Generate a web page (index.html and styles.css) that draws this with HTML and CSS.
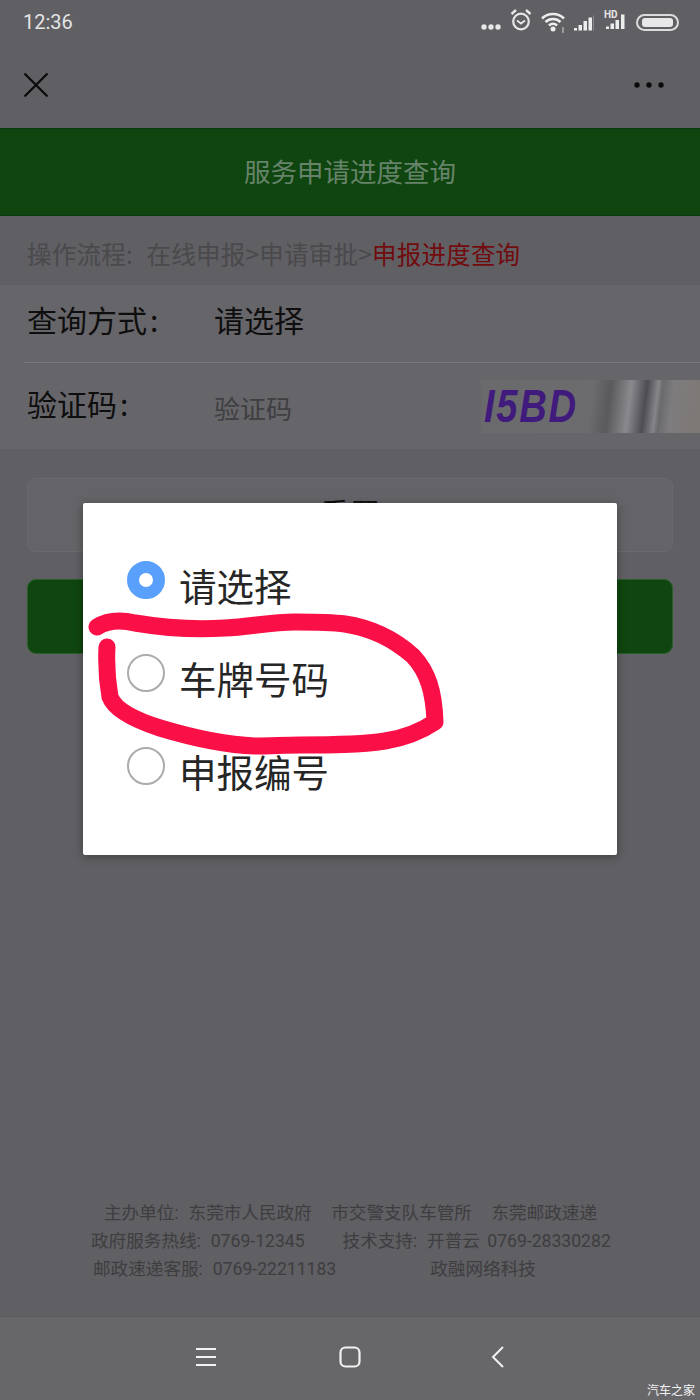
FILE: index.html
```html
<!DOCTYPE html>
<html lang="zh-CN">
<head>
<meta charset="utf-8">
<title>服务申请进度查询</title>
<link rel="stylesheet" href="styles.css">
</head>
<body>
<div class="screen">
  <div class="status">
    <span class="time">12:36</span>
    <div class="status-icons">
      <svg class="ic-dots" viewBox="0 0 20 6"><circle cx="3" cy="3" r="2.700"/><circle cx="10" cy="3" r="2.700"/><circle cx="17" cy="3" r="2.700"/></svg>
      <svg class="ic-alarm" viewBox="0 0 22 24"><circle cx="11" cy="13.500" r="7.800" fill="none" stroke="#e6e6e6" stroke-width="2.200"/><path d="M7 12.500l4 3 4-3" fill="none" stroke="#e6e6e6" stroke-width="1.800"/><path d="M1.500 6L6 2M20.500 6L16 2" stroke="#e6e6e6" stroke-width="2.400" fill="none"/></svg>
      <svg class="ic-wifi" viewBox="0 0 26 24"><path d="M1 8.500C7 2.500 17 2.500 23 8.500M4.500 12C8.500 8 15.500 8 19.500 12M8 15.500C10.300 13.300 13.700 13.300 16 15.500" fill="none" stroke="#ededed" stroke-width="2.600"/><circle cx="12" cy="19" r="2.500" fill="#ededed"/><path d="M22 17v6" stroke="#bbb" stroke-width="1.300"/></svg>
      <svg class="ic-signal" viewBox="0 0 20 16"><path d="M0 13h3v2.500H0zM4.500 10H8v5.500H4.500zM9.500 6h3.500v9.500H9.500zM14.500 2.500H18v13h-3.500z" fill="#ededed"/><path d="M19 0.500h1v15h-1z" fill="#8a898c"/></svg>
      <div class="ic-hd">
        <span class="hd-label">HD</span>
        <svg class="ic-signal-hd" viewBox="0 0 20 16"><path d="M0 12.500h3V15H0zM4.500 9.500H8V15H4.500zM9.500 6H13v9H9.500zM15 0.500h3.500V15H15z" fill="#ededed"/></svg>
      </div>
      <div class="battery"><div class="battery-fill"></div></div>
    </div>
  </div>

  <div class="topnav">
    <svg class="ic-close" viewBox="0 0 26 26"><path d="M1.500 1.500l23 23M24.500 1.500l-23 23" stroke="#0a0a0a" stroke-width="2.200" fill="none"/></svg>
    <svg class="ic-more" viewBox="0 0 32 8"><circle cx="4" cy="4" r="2.700"/><circle cx="16" cy="4" r="2.700"/><circle cx="28" cy="4" r="2.700"/></svg>
  </div>

  <div class="title">服务申请进度查询</div>

  <div class="crumbs">操作流程: 在线申报&gt;申请审批&gt;<span class="crumb-now">申报进度查询</span></div>

  <div class="form">
    <div class="row row-first">
      <span class="label">查询方式<span class="colon">:</span></span>
      <span class="value">请选择</span>
    </div>
    <div class="row row-second">
      <span class="label label-code">验证码<span class="colon">:</span></span>
      <span class="placeholder">验证码</span>
      <div class="captcha"><span class="captcha-text">I5BD</span></div>
    </div>
  </div>

  <div class="actions">
    <div class="btn btn-reset"><span class="btn-text">重置</span></div>
    <div class="btn btn-submit"></div>
  </div>

  <div class="footer">
    <div class="foot-row foot-1"><span>主办单位<span class="sep">: </span>东莞市人民政府</span><span>市交警支队车管所</span><span>东莞邮政速递</span></div>
    <div class="foot-row foot-2"><span>政府服务热线<span class="sep">: </span>0769-12345</span><span>技术支持<span class="sep">: </span>开普云 0769-28330282</span></div>
    <div class="foot-row foot-3"><span>邮政速递客服<span class="sep">: </span>0769-22211183</span><span>政融网络科技</span></div>
  </div>

  <div class="softkeys">
    <svg class="key key-menu" viewBox="0 0 22 20"><path d="M1 2h20M1 10h20M1 18h20" stroke="#f2f2f2" stroke-width="2" fill="none"/></svg>
    <svg class="key key-home" viewBox="0 0 22 22"><rect x="1.500" y="1.500" width="19" height="19" rx="5" fill="none" stroke="#f2f2f2" stroke-width="2.200"/></svg>
    <svg class="key key-back" viewBox="0 0 14 22"><path d="M12 1L2 11l10 10" stroke="#f2f2f2" stroke-width="2" fill="none"/></svg>
  </div>

  <div class="dialog">
    <div class="option"><span class="radio radio-on"></span><span class="option-text">请选择</span></div>
    <div class="option"><span class="radio"></span><span class="option-text">车牌号码</span></div>
    <div class="option"><span class="radio"></span><span class="option-text">申报编号</span></div>
  </div>

  <svg class="ink" viewBox="0 0 700 1400">
    <path d="M97 627C108 620 122 620 135 623C165 628 195 630 225 628C250 627 270 622 295 622C315 622 330 622 345 624C372 628 395 640 413 656C428 672 434 692 435 722C420 732 405 738 385 741C360 745 330 745 300 745C285 745 270 746 255 746C225 745 190 737 160 728C135 720 115 710 110 697C107 680 106 665 107 647"/>
  </svg>

  <span class="watermark">汽车之家</span>
</div>
</body>
</html>
```

FILE: styles.css
```css
* { box-sizing: border-box; }

html, body {
  margin: 0;
  padding: 0;
  background: #605f63;
}

.screen {
  position: relative;
  width: 700px;
  height: 1400px;
  overflow: hidden;
  display: flex;
  flex-direction: column;
  background: #605f63;
  font-family: "Noto Sans CJK SC", "Noto Sans", sans-serif;
}

/* status bar */
.status {
  height: 44px;
  flex: none;
  display: flex;
  align-items: center;
  justify-content: space-between;
  padding: 0 21px 0 23px;
}

.time {
  font-family: Roboto, sans-serif;
  font-size: 20px;
  color: #e4e4e4;
}

.status-icons {
  display: flex;
  align-items: center;
}

.ic-dots { width: 20px; height: 6px; fill: #e6e6e6; margin: 10px 0 0 0; }
.ic-alarm { width: 22px; height: 24px; margin: -4px 0 0 9px; }
.ic-wifi { width: 26px; height: 24px; margin: 0 0 0 9px; }
.ic-signal { width: 20px; height: 16px; margin: 2px 0 0 7px; }

.ic-hd {
  display: flex;
  flex-direction: column;
  align-items: flex-start;
  width: 24px;
  margin: -4px 0 0 10px;
}

.hd-label {
  font-family: Roboto, sans-serif;
  font-size: 10px;
  font-weight: 700;
  line-height: 9px;
  color: #e6e6e6;
}

.ic-signal-hd { width: 24px; height: 16px; margin-top: -5px; }

.battery {
  width: 43px;
  height: 17px;
  margin: 0 0 0 8px;
  padding: 2px 4px;
  border: 2px solid #dcdcdc;
  border-radius: 9px;
}

.battery-fill {
  width: 100%;
  height: 100%;
  background: #e8e8e8;
  border-radius: 3px;
}

/* top navigation */
.topnav {
  height: 84px;
  flex: none;
  display: flex;
  align-items: center;
  justify-content: space-between;
  padding: 0 35px 2px 23px;
}

.ic-close { width: 26px; height: 26px; }
.ic-more { width: 32px; height: 8px; fill: #0a0a0a; }

/* green title */
.title {
  height: 88px;
  flex: none;
  display: flex;
  align-items: center;
  justify-content: center;
  padding-bottom: 4px;
  background: #0f450f;
  border-top: 1px solid #0a3a10;
  border-bottom: 1px solid #0a3a10;
  font-size: 26.500px;
  color: #66836a;
}

/* breadcrumbs */
.crumbs {
  height: 69px;
  flex: none;
  padding: 6px 0 0 27px;
  display: flex;
  align-items: center;
  background: #605f63;
  font-size: 24.500px;
  letter-spacing: .22px;
  word-spacing: 8px;
  color: #4a494c;
  white-space: pre;
}

.crumb-now { color: #710b0e; }

/* form */
.form {
  height: 164px;
  flex: none;
  padding-left: 24px;
  background: #666569;
}

.row {
  display: flex;
  align-items: center;
  color: #0e0e0e;
}

.row-first {
  height: 78px;
  padding: 0 0 10px 3px;
  border-bottom: 1px solid #79787c;
}

.row-second {
  height: 86px;
  padding-left: 3px;
}

.label {
  width: 187px;
  font-size: 30px;
  line-height: 40px;
}

.colon { margin-left: 3px; }

.label-code { margin-top: -6px; }

.value {
  font-size: 30px;
  line-height: 40px;
}

.placeholder {
  width: 267px;
  font-size: 26px;
  line-height: 36px;
  margin-top: 4px;
  color: #3f3e41;
}

.captcha {
  width: 219px;
  height: 53px;
  margin-top: 0;
  display: flex;
  align-items: center;
  padding-left: 3px;
  background: linear-gradient(97deg, #6a6a6c 0, #6c6c6e 50%, #5a5a5c 58%, #6f6f72 62%, #8a8a8e 67%, #67676b 71%, #4e4e52 74%, #85858a 79%, #6a6a6c 81%, #7e7c7e 86%, #7e7874 100%);
}

.captcha-text {
  font-family: "Liberation Sans", sans-serif;
  font-size: 46px;
  line-height: 53px;
  font-weight: 700;
  font-style: italic;
  letter-spacing: 2px;
  color: #401a7c;
  transform: scaleX(.83);
  transform-origin: left center;
}

/* buttons */
.actions {
  flex: none;
  padding: 29px 27px 0;
  display: flex;
  flex-direction: column;
  gap: 27px;
}

.btn {
  height: 75px;
  border-radius: 9px;
  display: flex;
  align-items: center;
  justify-content: center;
}

.btn-reset {
  height: 74px;
  padding-bottom: 7px;
  background: #646367;
  border: 1px solid #6b6a6e;
}

.btn-text {
  font-size: 30px;
  color: #0e0e0e;
}

.btn-submit {
  background: #0f450f;
  border: 1px solid #2a5f2a;
}

/* footer */
.footer {
  flex: 1;
  display: flex;
  flex-direction: column;
  justify-content: flex-end;
  gap: 4px;
  padding-bottom: 35px;
  font-size: 17.600px;
  line-height: 24px;
  word-spacing: 3px;
  color: #3e3d40;
  font-family: Roboto, "Noto Sans CJK SC", sans-serif;
}

.sep { word-spacing: 5.500px; }

.foot-row { display: flex; white-space: pre; }
.foot-1 { padding-left: 104px; gap: 19.500px; }
.foot-2 { padding-left: 91px; gap: 38px; }
.foot-3 { padding-left: 93px; gap: 94px; }

/* soft keys */
.softkeys {
  height: 84px;
  flex: none;
  position: relative;
  display: grid;
  grid-template-columns: 22px 22px 14px;
  column-gap: 122px;
  justify-content: start;
  align-items: center;
  padding: 0 0 3px 195px;
  background: #676669;
  border-top: 1px solid #59585c;
}

.key { display: block; }
.key-menu { width: 22px; height: 20px; }
.key-home { width: 22px; height: 22px; }
.key-back { width: 14px; height: 22px; margin-left: 8px; }

/* dialog */
.dialog {
  position: absolute;
  left: 83px;
  top: 503px;
  width: 534px;
  height: 352px;
  padding: 58px 0 0 44px;
  background: #fff;
  border-radius: 2px;
  box-shadow: 0 2px 10px rgba(0, 0, 0, .35);
  display: flex;
  flex-direction: column;
  gap: 55px;
}

.option {
  height: 38px;
  display: flex;
  align-items: flex-start;
  gap: 14px;
}

.radio {
  width: 38px;
  height: 38px;
  flex: none;
  border-radius: 50%;
  border: 2px solid #ababab;
  background: #fff;
}

.radio-on {
  border: 12px solid #58a0fb;
}

.option-text {
  font-size: 37.500px;
  line-height: 50px;
  margin-top: -1px;
  color: #262626;
  white-space: nowrap;
}

/* hand-drawn mark */
.ink {
  position: absolute;
  left: 0;
  top: 0;
  width: 700px;
  height: 1400px;
  pointer-events: none;
  fill: none;
  stroke: #fb0f47;
  stroke-width: 17;
  stroke-linecap: round;
  stroke-linejoin: round;
}

.watermark {
  position: absolute;
  right: 5px;
  bottom: 3px;
  font-size: 12px;
  line-height: 14px;
  color: #f4f4f4;
}
```
